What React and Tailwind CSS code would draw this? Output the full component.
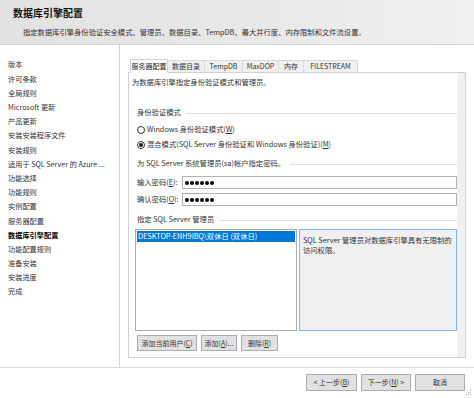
import React from "react";

const navItems = [
    "版本",
    "许可条款",
    "全局规则",
    "Microsoft 更新",
    "产品更新",
    "安装安装程序文件",
    "安装规则",
    "适用于 SQL Server 的 Azure ...",
    "功能选择",
    "功能规则",
    "实例配置",
    "服务器配置",
    "数据库引擎配置",
    "功能配置规则",
    "准备安装",
    "安装进度",
    "完成",
];

const tabs = [
    { label: "服务器配置", w: "w-[38px]", active: true },
    { label: "数据目录", w: "w-[37px]" },
    { label: "TempDB", w: "w-[38px]" },
    { label: "MaxDOP", w: "w-[36px]" },
    { label: "内存", w: "w-[25px]" },
    { label: "FILESTREAM", w: "w-[54px]" },
];

// access key with underline, e.g. (W)
const Key = ({ k }) => (
    <>
        (<span className="underline">{k}</span>)
    </>
);

const GroupLabel = ({ children }) => (
    <div className="flex items-center gap-[5px] h-[14px]">
        <span className="whitespace-nowrap">{children}</span>
        <div className="flex-1 h-px bg-[#e0e0e0]" />
    </div>
);

const Radio = ({ checked, children }) => (
    <div className="flex items-center h-[15px] pl-[5px] gap-[2px]">
        <div className="w-[8px] h-[8px] rounded-full border border-[#333] bg-white flex items-center justify-center">
            {checked && <div className="w-[4px] h-[4px] rounded-full bg-[#222]" />}
        </div>
        <span className="whitespace-nowrap">{children}</span>
    </div>
);

const PasswordRow = ({ label, k }) => (
    <div className="flex items-center h-[13px] pl-[5px]">
        <span className="w-[45px] whitespace-nowrap">
            {label}
            <Key k={k} />:
        </span>
        <div className="flex-1 h-[13px] border border-[#b4b4b4] bg-white flex items-center pl-[2px] gap-[1px]">
            {[0, 1, 2, 3, 4, 5].map((i) => (
                <div key={i} className="w-[4px] h-[4px] rounded-full bg-black" />
            ))}
        </div>
    </div>
);

const Btn = ({ children, className = "" }) => (
    <button className={`h-[16px] px-[5px] bg-[#e1e1e1] border border-[#adadad] text-[7px] text-[#333] flex items-center justify-center whitespace-nowrap ${className}`}>
        {children}
    </button>
);

export default function App() {
    return (
        <div className="w-[474px] h-[398px] bg-white flex flex-col overflow-hidden text-[7.3px] leading-none text-[#222] font-['Noto_Sans_CJK_SC','Liberation_Sans',sans-serif]">

            {/* HEADER */}
            <div className="h-[45px] shrink-0 bg-gradient-to-r from-[#e2e2e2] via-[#e8e8e8] to-[#f0f0f0] border-b border-[#d2d2d2] flex flex-col">
                <div className="pl-[13px] pt-[8px] h-[20px] text-[10px] font-bold text-[#111]">数据库引擎配置</div>
                <div className="pl-[23px] pt-[9px] text-[7.3px] text-[#333] whitespace-nowrap">
                    指定数据库引擎身份验证安全模式、管理员、数据目录、TempDB、最大并行度、内存限制和文件流设置。
                </div>
            </div>

            {/* BODY */}
            <div className="flex-1 flex min-h-0">

                {/* NAV */}
                <div className="w-[120px] shrink-0 border-r border-[#d5d5d5] pt-[13px] pl-[8px] text-[7.2px] text-[#333]">
                    {navItems.map((item) => (
                        <div
                            key={item}
                            className={`h-[14.2px] flex items-center whitespace-nowrap ${item === "数据库引擎配置" ? "font-bold text-black" : ""}`}
                        >
                            {item}
                        </div>
                    ))}
                </div>

                {/* CONTENT */}
                <div className="flex-1 pl-[8px] pr-[8px] pt-[13px]">

                    {/* TABS */}
                    <div className="flex items-end h-[14px] pl-[2px]">
                        {tabs.map((t) =>
                            t.active ? (
                                <div
                                    key={t.label}
                                    className={`${t.w} h-[14px] -mb-px relative z-10 bg-white border border-[#d0d0d0] border-b-white flex items-center justify-center text-[7px]`}
                                >
                                    {t.label}
                                </div>
                            ) : (
                                <div
                                    key={t.label}
                                    className={`${t.w} h-[12px] bg-[#f0f0f0] border border-l-0 border-b-0 border-[#d9d9d9] flex items-center justify-center text-[7px] text-[#333]`}
                                >
                                    {t.label}
                                </div>
                            )
                        )}
                    </div>

                    {/* PANEL */}
                    <div className="border border-[#d0d0d0] bg-[#f0f0f0] flex">
                        <div className="flex-1 bg-white pl-[3px] pb-[6px] text-[#333]">
                            <div className="h-[20px] flex items-center">为数据库引擎指定身份验证模式和管理员。</div>

                            <div className="mt-[13px] pl-[5px]">
                                <GroupLabel>身份验证模式</GroupLabel>
                            </div>
                            <div className="mt-[2px]">
                                <Radio>
                                    Windows 身份验证模式<Key k="W" />
                                </Radio>
                                <Radio checked>
                                    混合模式(SQL Server 身份验证和 Windows 身份验证)<Key k="M" />
                                </Radio>
                            </div>

                            <div className="mt-[5px] pl-[5px]">
                                <GroupLabel>为 SQL Server 系统管理员(sa)帐户指定密码。</GroupLabel>
                            </div>
                            <div className="mt-[5px]">
                                <PasswordRow label="输入密码" k="E" />
                            </div>
                            <div className="mt-[4px]">
                                <PasswordRow label="确认密码" k="O" />
                            </div>

                            <div className="mt-[7px] pl-[5px]">
                                <GroupLabel>指定 SQL Server 管理员</GroupLabel>
                            </div>

                            <div className="mt-[2px] pl-[3px] flex gap-[2px] h-[102px]">
                                <div className="w-[162px] border border-[#abadb3] bg-white p-px">
                                    <div className="h-[11px] bg-[#0078d7] text-white flex items-center pl-[1px] whitespace-nowrap">
                                        DESKTOP-ENH9IBQ\双休日 (双休日)
                                    </div>
                                </div>
                                <div className="flex-1 border border-[#86b6e6] bg-[#f0f0f0] pl-[3px] pt-[5px] leading-[10px] text-[#333]">
                                    SQL Server 管理员对数据库引擎具有无限制的
                                    <br />
                                    访问权限。
                                </div>
                            </div>

                            <div className="mt-[4px] pl-[5px] flex gap-[4px]">
                                <Btn className="w-[60px]">
                                    添加当前用户<Key k="C" />
                                </Btn>
                                <Btn className="w-[36px]">
                                    添加<Key k="A" />...
                                </Btn>
                                <Btn className="w-[37px]">
                                    删除<Key k="R" />
                                </Btn>
                            </div>
                        </div>
                        <div className="w-[8px] shrink-0" />
                    </div>
                </div>
            </div>

            {/* FOOTER */}
            <div className="h-[31px] shrink-0 border-t border-[#dcdcdc] flex justify-end items-start pt-[6px] pr-[9px] gap-[4px] relative">
                <Btn className="w-[51px] h-[17px]">
                    &lt; 上一步<Key k="B" />
                </Btn>
                <Btn className="w-[50px] h-[17px]">
                    下一步<Key k="N" /> &gt;
                </Btn>
                <Btn className="w-[50px] h-[17px]">取消</Btn>
                <svg className="absolute right-[2px] bottom-[2px]" width="6" height="6" viewBox="0 0 6 6">
                    <rect x="4" y="0" width="1" height="1" fill="#b0b0b0" />
                    <rect x="2" y="2" width="1" height="1" fill="#b0b0b0" />
                    <rect x="4" y="2" width="1" height="1" fill="#b0b0b0" />
                    <rect x="0" y="4" width="1" height="1" fill="#b0b0b0" />
                    <rect x="2" y="4" width="1" height="1" fill="#b0b0b0" />
                    <rect x="4" y="4" width="1" height="1" fill="#b0b0b0" />
                </svg>
            </div>
        </div>
    );
}
